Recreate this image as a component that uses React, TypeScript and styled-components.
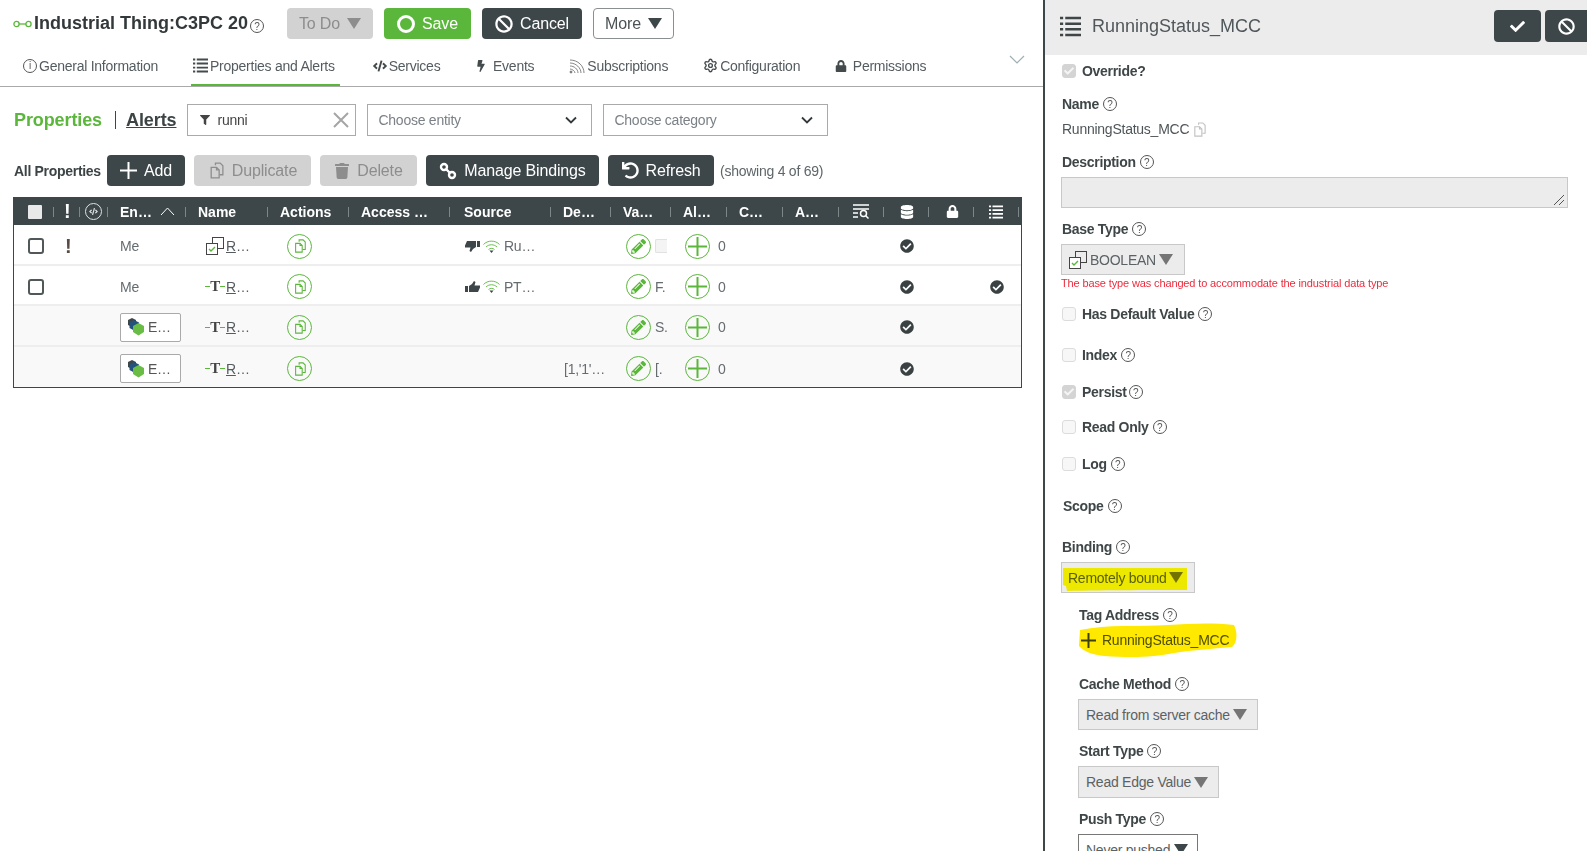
import React from 'react';
import styled, { createGlobalStyle } from 'styled-components';
import { Settings } from 'lucide-react';
import {
  FaBan,
  FaBolt,
  FaCheck,
  FaCheckCircle,
  FaCode,
  FaDatabase,
  FaFilter,
  FaLock,
  FaPencilAlt,
  FaTrash,
  FaUndo,
} from 'react-icons/fa';

const DARK = '#3d4648';
const GREEN = '#5bb73b';
const TEXT = '#5a6266';

const GlobalStyle = createGlobalStyle`
  html, body { margin: 0; padding: 0; height: 100%; overflow: hidden; background: #fff; }
  body {
    font-family: "Liberation Sans", Arial, sans-serif;
    font-size: 14px;
    letter-spacing: -0.25px;
    color: ${TEXT};
  }
  * { box-sizing: border-box; }
`;

const Page = styled.div`
  display: flex;
  width: 1587px;
  height: 851px;
  overflow: hidden;
`;

const Left = styled.div`
  width: 1043px;
  flex: none;
`;

const TopBar = styled.div`
  display: flex;
  align-items: center;
  height: 31px;
  margin-top: 8px;
  padding-left: 13px;
`;

const Title = styled.h1`
  display: flex;
  align-items: center;
  margin: 0;
  width: 274px;
  font-size: 18px;
  font-weight: 700;
  letter-spacing: 0;
  color: #33393b;
  white-space: nowrap;
`;

const Btn = styled.button<{ $kind?: 'dark' | 'green' | 'off' | 'line'; $w: number; $ml?: number }>`
  display: inline-flex;
  align-items: center;
  justify-content: center;
  gap: 7px;
  width: ${({ $w }) => $w}px;
  height: 31px;
  margin-left: ${({ $ml }) => $ml ?? 9}px;
  padding: 0;
  flex: none;
  font: 16px "Liberation Sans", Arial, sans-serif;
  letter-spacing: -0.15px;
  border-radius: 4px;
  border: ${({ $kind }) => ($kind === 'line' ? '1px solid #8a8f91' : '0')};
  background: ${({ $kind }) =>
    $kind === 'green' ? GREEN : $kind === 'off' ? '#d2d2d2' : $kind === 'line' ? '#fff' : DARK};
  color: ${({ $kind }) => ($kind === 'off' ? '#8d8d8d' : $kind === 'line' ? '#4b5254' : '#fff')};
`;

const Caret = styled.i<{ $color?: string; $size?: number }>`
  display: inline-block;
  width: 0;
  height: 0;
  flex: none;
  border-left: ${({ $size }) => $size ?? 7}px solid transparent;
  border-right: ${({ $size }) => $size ?? 7}px solid transparent;
  border-top: ${({ $size }) => ($size ?? 7) + 4}px solid ${({ $color }) => $color ?? '#757575'};
`;

const Ring = styled.i`
  display: inline-block;
  width: 18px;
  height: 18px;
  border: 3px solid #fff;
  border-radius: 50%;
`;

const HelpMark = styled.span<{ $ml?: number; $mt?: number }>`
  display: inline-flex;
  align-items: center;
  justify-content: center;
  width: 14px;
  height: 14px;
  margin-left: ${({ $ml }) => $ml ?? 4}px;
  margin-top: ${({ $mt }) => $mt ?? 0}px;
  border: 1px solid #555;
  border-radius: 50%;
  font: 400 10px "Liberation Sans", Arial, sans-serif;
  color: #555;
  flex: none;
`;

const Tabs = styled.nav`
  display: flex;
  gap: 25px;
  height: 48px;
  padding-left: 18px;
  border-bottom: 1px solid #aaa;
  position: relative;
`;

const Tab = styled.div<{ $active?: boolean; $ml?: number; $pl?: number }>`
  display: flex;
  align-items: center;
  gap: 2px;
  height: 47px;
  margin-left: ${({ $ml }) => $ml ?? 0}px;
  padding: 8px 5px 0 ${({ $pl }) => $pl ?? 5}px;
  font-size: 14px;
  color: #555c60;
  white-space: nowrap;
  border-bottom: 2px solid ${({ $active }) => ($active ? GREEN : 'transparent')};
  svg { flex: none; color: #444b4d; }
`;

const TabsChevron = styled.span`
  position: absolute;
  right: 18px;
  top: 16px;
  color: #9fb0b4;
  line-height: 0;
`;

const FilterRow = styled.div`
  display: flex;
  align-items: center;
  height: 32px;
  margin-top: 17px;
  padding-left: 14px;
`;

const PropsLink = styled.span`
  font-size: 18px;
  font-weight: 700;
  letter-spacing: -0.1px;
  color: ${GREEN};
`;

const Divider = styled.span`
  width: 1px;
  height: 18px;
  margin: 0 10px 0 13px;
  background: #444;
`;

const AlertsLink = styled.span`
  font-size: 18px;
  font-weight: 700;
  letter-spacing: -0.1px;
  color: #3d4446;
  text-decoration: underline;
`;

const FilterBox = styled.div`
  display: flex;
  align-items: center;
  width: 169px;
  height: 32px;
  margin-left: 11px;
  padding: 0 6px 0 12px;
  border: 1px solid #aaa;
  font-size: 14px;
  color: #444;
  svg:first-child { margin-right: 7px; color: #444; }
  span { flex: 1; }
`;

const Choose = styled.div<{ $ml: number }>`
  display: flex;
  align-items: center;
  justify-content: space-between;
  width: 225px;
  height: 32px;
  margin-left: ${({ $ml }) => $ml}px;
  padding: 0 14px 0 10px;
  border: 1px solid #aaa;
  font-size: 14px;
  color: #7b8187;
`;

const ActionRow = styled.div`
  display: flex;
  align-items: center;
  height: 31px;
  margin-top: 19px;
  padding-left: 14px;
`;

const AllLabel = styled.b`
  width: 93px;
  font-size: 14px;
  letter-spacing: -0.3px;
  color: #3d4446;
  white-space: nowrap;
`;

const Showing = styled.span`
  margin-left: 6px;
  font-size: 14px;
  color: #5f6669;
`;

const TableBox = styled.div`
  width: 1009px;
  margin: 11px 0 0 13px;
  border: 1px solid ${DARK};
`;

const COLUMNS = '40px 26px 28px 78px 82px 81px 101px 101px 60px 60px 56px 56px 56px 45px 45px 45px 45px 1fr';

const HeaderRow = styled.div`
  display: grid;
  grid-template-columns: ${COLUMNS};
  height: 27px;
  background: ${DARK};
  color: #fff;
`;

const HeadCell = styled.div<{ $pad?: number; $line?: boolean; $big?: boolean }>`
  display: flex;
  align-items: center;
  justify-content: space-between;
  align-self: center;
  height: 10px;
  padding-left: ${({ $pad }) => $pad ?? 12}px;
  border-right: ${({ $line }) => ($line === false ? '0' : '1px solid #7d8688')};
  font-size: ${({ $big }) => ($big ? 20 : 14)}px;
  font-weight: 700;
  letter-spacing: 0;
  white-space: nowrap;
  svg { flex: none; }
`;

const HeadBox = styled.i`
  display: block;
  width: 14px;
  height: 14px;
  background: #e9e9e9;
  border-radius: 1px;
`;

const CodeRing = styled.span`
  display: inline-flex;
  align-items: center;
  justify-content: center;
  width: 17px;
  height: 17px;
  border: 1px solid #dfe3e3;
  border-radius: 50%;
  color: #dfe3e3;
`;

const Row = styled.div<{ $shade?: boolean }>`
  display: grid;
  grid-template-columns: ${COLUMNS};
  height: 40.5px;
  padding-top: 4px;
  align-items: center;
  background: ${({ $shade }) => ($shade ? '#f9f9f9' : '#fff')};
  border-bottom: 2px solid #eee;
  font-size: 14px;
  color: #656c70;
  &:last-child { border-bottom: 0; }
`;

const Cell = styled.div<{ $pad?: number; $gap?: number }>`
  display: flex;
  align-items: center;
  gap: ${({ $gap }) => $gap ?? 0}px;
  min-width: 0;
  padding-left: ${({ $pad }) => $pad ?? 0}px;
  white-space: nowrap;
  svg { flex: none; }
`;

const Check = styled.i`
  display: block;
  width: 16px;
  height: 16px;
  border: 2px solid #51585a;
  border-radius: 3px;
  background: #fff;
`;

const Bang = styled.b`
  font-size: 20px;
  color: #5a4a44;
  line-height: 1;
`;

const EntityBadge = styled.div`
  display: flex;
  align-items: center;
  gap: 3px;
  width: 61px;
  height: 29px;
  padding-left: 6px;
  border: 1px solid #aaa;
  border-radius: 2px;
  background: #fff;
  color: #555;
`;

const NameLink = styled.span`
  color: #555c60;
  span { text-decoration: underline; }
`;

const TextIcon = styled.span`
  display: inline-flex;
  align-items: center;
  width: 18px;
  flex: none;
  justify-content: center;
  font: 700 15px "Liberation Serif", serif;
  color: #444;
  &::before, &::after {
    content: '';
    width: 5px;
    flex: none;
    height: 1px;
    background: ${GREEN};
  }
`;

const ActionCircle = styled.span`
  display: inline-flex;
  align-items: center;
  justify-content: center;
  width: 25px;
  height: 25px;
  flex: none;
  border: 1px solid ${GREEN};
  border-radius: 50%;
  color: ${GREEN};
`;

const MiniBox = styled.i`
  display: block;
  width: 12px;
  height: 14px;
  flex: none;
  border: 1px solid #e1e1e1;
  border-right: 0;
  border-radius: 2px 0 0 2px;
  background: #f4f4f4;
`;

const Right = styled.aside`
  width: 544px;
  height: 851px;
  flex: none;
  overflow: hidden;
  border-left: 2px solid ${DARK};
`;

const PanelHead = styled.header`
  display: flex;
  align-items: center;
  height: 55px;
  padding: 0 0 3px 15px;
  background: #ececec;
  svg { color: #3f4648; }
`;

const PanelTitle = styled.div`
  flex: 1;
  margin-left: 11px;
  font-size: 18px;
  letter-spacing: 0;
  color: #50575a;
`;

const SquareBtn = styled.button<{ $ml?: number; $w: number }>`
  display: inline-flex;
  align-items: center;
  justify-content: center;
  width: ${({ $w }) => $w}px;
  height: 32px;
  margin-left: ${({ $ml }) => $ml ?? 0}px;
  padding: 0;
  flex: none;
  border: 0;
  border-radius: 4px 0 0 4px;
  border-top-right-radius: ${({ $w }) => ($w > 44 ? '4px' : '0')};
  border-bottom-right-radius: ${({ $w }) => ($w > 44 ? '4px' : '0')};
  background: ${DARK};
  svg { color: #fff; }
`;

const Form = styled.div`
  padding-left: 16px;
`;

const Nested = styled.div`
  padding-left: 17px;
`;

const Line = styled.div<{ $mt: number; $pl?: number }>`
  display: flex;
  align-items: center;
  height: 18px;
  margin-top: ${({ $mt }) => $mt}px;
  padding-left: ${({ $pl }) => $pl ?? 1}px;
  font-size: 14px;
  color: #4f5659;
  white-space: nowrap;
  position: relative;
`;

const FieldName = styled.b`
  font-weight: 700;
  letter-spacing: -0.3px;
  color: #3f4648;
`;

const Box = styled.i<{ $checked?: boolean }>`
  display: inline-flex;
  align-items: center;
  justify-content: center;
  width: 14px;
  height: 14px;
  margin-right: 6px;
  flex: none;
  border-radius: 3px;
  border: 1px solid ${({ $checked }) => ($checked ? '#d4d4d4' : '#dcdcdc')};
  background: ${({ $checked }) => ($checked ? '#d4d4d4' : '#f7f7f7')};
  color: #f5f5f5;
`;

const TextArea = styled.div`
  width: 507px;
  height: 31px;
  margin-top: 6px;
  background: #ececec;
  border: 1px solid #c8c8c8;
  display: flex;
  align-items: flex-end;
  justify-content: flex-end;
  padding: 0 3px 2px 0;
  color: #555;
  line-height: 0;
`;

const Select = styled.div<{ $w: number; $h?: number; $plain?: boolean; $gap?: number }>`
  display: flex;
  align-items: center;
  gap: ${({ $gap }) => $gap ?? 3}px;
  width: ${({ $w }) => $w}px;
  height: ${({ $h }) => $h ?? 31}px;
  margin-top: 6px;
  padding-left: 7px;
  background: ${({ $plain }) => ($plain ? '#fff' : '#ececec')};
  border: 1px solid ${({ $plain }) => ($plain ? '#777' : '#c8c8c8')};
  font-size: 14px;
  color: #5b6266;
  white-space: nowrap;
  position: relative;
`;

const ErrorText = styled.div`
  margin-top: 1px;
  height: 14px;
  font-size: 11px;
  letter-spacing: -0.13px;
  line-height: 14px;
  color: #ee2a3c;
  white-space: nowrap;
`;

const Marker = styled.svg`
  position: absolute;
  mix-blend-mode: multiply;
  pointer-events: none;
`;

const CopyIcon: React.FC<{ size?: number; color?: string }> = ({ size = 15, color = 'currentColor' }) => (
  <svg width={size} height={size} viewBox="0 0 16 16" fill="none" stroke={color} strokeWidth="1.2">
    <path d="M7 3V1h4.5L14 3.5V12h-3" />
    <path d="M3 5h5l2.5 2.5V15H3z" />
    <path d="M8 5v2.5h2.5" />
  </svg>
);

const PlusIcon: React.FC<{ size: number; width?: number; color?: string }> = ({ size, width = 2, color = 'currentColor' }) => (
  <svg width={size} height={size} viewBox="0 0 20 20" fill="none" stroke={color} strokeWidth={(width * 20) / size}>
    <path d="M10 0v20M0 10h20" />
  </svg>
);

const ListIcon: React.FC<{ size: number; color?: string }> = ({ size, color = 'currentColor' }) => (
  <svg width={size} height={size} viewBox="0 0 20 20" fill="none" stroke={color} strokeWidth="2.4">
    <path d="M0 2h3M5 2h15M0 7.300h3M5 7.300h15M0 12.700h3M5 12.700h15M0 18h3M5 18h15" />
  </svg>
);

const BoolIcon: React.FC = () => (
  <svg width="18" height="18" viewBox="0 0 18 18" fill="none">
    <rect x="6.5" y="0.500" width="11" height="11" stroke="#444" fill="none" />
    <rect x="0.500" y="6.500" width="11" height="11" stroke="#444" fill="#fff" />
    <path d="M3 12l2 2 4-4" stroke={GREEN} strokeWidth="1.4" />
  </svg>
);

const HexIcon: React.FC = () => (
  <svg width="18" height="18" viewBox="0 0 18 18">
    <polygon points="5,0 9,2 9,7 5,9 1,7 1,2" fill="#3d4648" />
    <polygon points="7,2 12,4.500 12,10 7,12.500 2.500,10 2.500,4.500" fill="#23527c" />
    <polygon points="11.500,5 17,8 17,14 11.500,17.500 6,14 6,8" fill="#69bd45" />
  </svg>
);

const BindIcon: React.FC = () => (
  <svg width="18" height="18" viewBox="0 0 18 18" fill="none" stroke="#fff" strokeWidth="2.4">
    <circle cx="5" cy="5" r="3" />
    <circle cx="13" cy="13" r="3" />
    <path d="M7.500 7.500l3 3" />
  </svg>
);

const RssIcon: React.FC = () => (
  <svg width="16" height="16" viewBox="0 0 16 16" fill="none" stroke="#777" strokeWidth="0.9">
    <path d="M1 5c6 0 11 5 11 10" />
    <path d="M1 2c8 0 14 6 14 13" />
    <path d="M1 8c4 0 8 3 8 7" />
    <path d="M1 11c2 0 5 2 5 4" />
    <circle cx="2" cy="14" r="1" fill="#777" />
  </svg>
);

const ListSearchIcon: React.FC = () => (
  <svg width="16" height="15" viewBox="0 0 16 15" fill="none" stroke="#fff" strokeWidth="1.5">
    <path d="M0 1h16M0 5h16M0 9h5M0 13h5" />
    <circle cx="10.500" cy="9.500" r="3" />
    <path d="M13 12l2.500 2.500" />
  </svg>
);

const ThumbIcon: React.FC<{ down?: boolean }> = ({ down }) => (
  <svg width="15" height="11" viewBox="0 0 15 11" fill="#3d4648" style={down ? { transform: 'scale(-1,-1)' } : undefined}>
    <rect x="0" y="5" width="3" height="6" />
    <path d="M4 5l3-2 2-3 1.500 1-1 3.500H15v2l-2 4.500H4z" />
  </svg>
);

const WifiIcon: React.FC = () => (
  <svg width="17" height="13" viewBox="0 0 17 13" fill="none" stroke={GREEN} strokeWidth="0.9">
    <path d="M0.500 4.500C4.500 0 12.500 0 16.500 4.500" />
    <path d="M3 7c3-3 8-3 11 0" />
    <path d="M5.500 9.500c1.500-1.500 4.500-1.500 6 0" />
    <path d="M6.500 10.500h4l-2 2.500z" fill="#3d4648" stroke="none" />
  </svg>
);

const Help: React.FC<{ ml?: number; mt?: number }> = ({ ml, mt }) => (
  <HelpMark $ml={ml} $mt={mt}>
    ?
  </HelpMark>
);

const HEADERS = ['En…', 'Name', 'Actions', 'Access …', 'Source', 'De…', 'Va…', 'Al…', 'C…', 'A…'];

type RowData = {
  check: boolean;
  bang?: boolean;
  me: boolean;
  bool?: boolean;
  thumb?: 'up' | 'down';
  source?: string;
  def?: string;
  value: string;
  shade?: boolean;
  listed?: boolean;
};

const ROWS: RowData[] = [
  { check: true, bang: true, me: true, bool: true, thumb: 'down', source: 'Ru…', value: '' },
  { check: true, me: true, thumb: 'up', source: 'PT…', value: 'F.', listed: true },
  { check: false, me: false, value: 'S.', shade: true },
  { check: false, me: false, def: "[1,'1'…", value: '[.', shade: true },
];

const ChevronSmall: React.FC = () => (
  <svg width="12" height="8" viewBox="0 0 12 8" fill="none" stroke="#33393b" strokeWidth="1.8">
    <path d="M1 1.500l5 5 5-5" />
  </svg>
);

const App: React.FC = () => {
  return (
    <Page>
      <GlobalStyle />
      <Left>
        <TopBar>
          <Title>
            <svg width="19" height="8" viewBox="0 0 19 8" fill="none" stroke={GREEN} strokeWidth="1.3" style={{ marginRight: 2 }}>
              <circle cx="3.500" cy="4" r="2.600" />
              <circle cx="15.500" cy="4" r="2.600" />
              <path d="M6 4h7" />
            </svg>
            Industrial Thing:C3PC 20
            <Help ml={2} mt={5} />
          </Title>
          <Btn $kind="off" $w={86} $ml={0}>
            To Do <Caret $color="#8d8d8d" $size={7} />
          </Btn>
          <Btn $kind="green" $w={87} $ml={11}>
            <Ring /> Save
          </Btn>
          <Btn $w={100} $ml={11}>
            <FaBan size={18} /> Cancel
          </Btn>
          <Btn $kind="line" $w={81} $ml={11}>
            More <Caret $color="#3d4648" />
          </Btn>
        </TopBar>
        <Tabs>
          <Tab>
            <HelpMark $ml={0}>i</HelpMark> General Information
          </Tab>
          <Tab $active $ml={3} $pl={2}>
            <ListIcon size={15} /> Properties and Alerts
          </Tab>
          <Tab $ml={3}>
            <FaCode size={14} /> Services
          </Tab>
          <Tab>
            <FaBolt size={12} /> &nbsp;Events
          </Tab>
          <Tab>
            <RssIcon /> Subscriptions
          </Tab>
          <Tab>
            <Settings size={15} strokeWidth={2.2} /> Configuration
          </Tab>
          <Tab>
            <FaLock size={12} /> &nbsp;Permissions
          </Tab>
          <TabsChevron>
            <svg width="16" height="10" viewBox="0 0 16 10" fill="none" stroke="currentColor" strokeWidth="1.2">
              <path d="M1 1l7 7 7-7" />
            </svg>
          </TabsChevron>
        </Tabs>
        <FilterRow>
          <PropsLink>Properties</PropsLink>
          <Divider />
          <AlertsLink>Alerts</AlertsLink>
          <FilterBox>
            <FaFilter size={10} />
            <span>runni</span>
            <svg width="16" height="16" viewBox="0 0 16 16" stroke="#a5a5a5" strokeWidth="2">
              <path d="M1 1l14 14M15 1L1 15" />
            </svg>
          </FilterBox>
          <Choose $ml={11}>
            Choose entity <ChevronSmall />
          </Choose>
          <Choose $ml={11}>
            Choose category <ChevronSmall />
          </Choose>
        </FilterRow>
        <ActionRow>
          <AllLabel>All Properties</AllLabel>
          <Btn $w={78} $ml={0}>
            <PlusIcon size={17} /> Add
          </Btn>
          <Btn $kind="off" $w={117}>
            <CopyIcon size={17} /> Duplicate
          </Btn>
          <Btn $kind="off" $w={97}>
            <FaTrash size={16} /> Delete
          </Btn>
          <Btn $w={173}>
            <BindIcon /> Manage Bindings
          </Btn>
          <Btn $w={106}>
            <FaUndo size={17} /> Refresh
          </Btn>
          <Showing>(showing 4 of 69)</Showing>
        </ActionRow>
        <TableBox>
          <HeaderRow>
            <HeadCell $pad={14}>
              <HeadBox />
            </HeadCell>
            <HeadCell $pad={10} $big>
              !
            </HeadCell>
            <HeadCell $pad={5}>
              <CodeRing>
                <FaCode size={9} />
              </CodeRing>
            </HeadCell>
            {HEADERS.map((h, i) => (
              <HeadCell key={h} $pad={h === 'Source' ? 14 : 12}>
                <span>{h}</span>
                {i === 0 && (
                  <svg width="15" height="9" viewBox="0 0 15 9" fill="none" stroke="#fff" strokeWidth="1" style={{ marginRight: 10 }}>
                    <path d="M1 8l6.500-7L14 8" />
                  </svg>
                )}
              </HeadCell>
            ))}
            <HeadCell $pad={14}>
              <ListSearchIcon />
            </HeadCell>
            <HeadCell $pad={16}>
              <FaDatabase size={14} />
            </HeadCell>
            <HeadCell $pad={17}>
              <FaLock size={13} />
            </HeadCell>
            <HeadCell $pad={15}>
              <ListIcon size={14} />
            </HeadCell>
            <HeadCell $line={false} />
          </HeaderRow>
          {ROWS.map((r, i) => (
            <Row key={i} $shade={r.shade}>
              <Cell $pad={14}>{r.check && <Check />}</Cell>
              <Cell $pad={11}>{r.bang && <Bang>!</Bang>}</Cell>
              <Cell />
              <Cell $pad={12}>
                {r.me ? (
                  'Me'
                ) : (
                  <EntityBadge>
                    <HexIcon />E…
                  </EntityBadge>
                )}
              </Cell>
              <Cell $pad={20} $gap={2}>
                {r.bool ? <BoolIcon /> : <TextIcon>T</TextIcon>}
                <NameLink>
                  <span>R</span>…
                </NameLink>
              </Cell>
              <Cell $pad={19}>
                <ActionCircle>
                  <CopyIcon size={14} />
                </ActionCircle>
              </Cell>
              <Cell />
              <Cell $pad={15} $gap={3}>
                {r.thumb && <ThumbIcon down={r.thumb === 'down'} />}
                {r.thumb && <WifiIcon />}
                <span style={{ marginLeft: 1 }}>{r.source}</span>
              </Cell>
              <Cell $pad={13}>{r.def}</Cell>
              <Cell $pad={15} $gap={4}>
                <ActionCircle>
                  <FaPencilAlt size={15} />
                </ActionCircle>
                {r.value ? <span>{r.value}</span> : <MiniBox />}
              </Cell>
              <Cell $pad={14} $gap={8}>
                <ActionCircle>
                  <PlusIcon size={19} />
                </ActionCircle>
                0
              </Cell>
              <Cell />
              <Cell />
              <Cell />
              <Cell $pad={16}>
                <FaCheckCircle size={14} color="#3a4143" />
              </Cell>
              <Cell />
              <Cell $pad={16}>{r.listed && <FaCheckCircle size={14} color="#3a4143" />}</Cell>
              <Cell />
            </Row>
          ))}
        </TableBox>
      </Left>
      <Right>
        <PanelHead>
          <ListIcon size={21} />
          <PanelTitle>RunningStatus_MCC</PanelTitle>
          <SquareBtn $w={47}>
            <FaCheck size={15} />
          </SquareBtn>
          <SquareBtn $w={42} $ml={4}>
            <FaBan size={17} />
          </SquareBtn>
        </PanelHead>
        <Form>
          <Line $mt={7}>
            <Box $checked>
              <FaCheck size={10} />
            </Box>
            <FieldName>Override?</FieldName>
          </Line>
          <Line $mt={15}>
            <FieldName>Name</FieldName>
            <Help />
          </Line>
          <Line $mt={7}>
            RunningStatus_MCC
            <span style={{ marginLeft: 3, lineHeight: 0 }}>
              <CopyIcon size={15} color="#c2c2c2" />
            </span>
          </Line>
          <Line $mt={15}>
            <FieldName>Description</FieldName>
            <Help />
          </Line>
          <TextArea>
            <svg width="10" height="10" viewBox="0 0 10 10" fill="none" stroke="currentColor" strokeWidth="1">
              <path d="M0 10L10 0M5 10l5-5" />
            </svg>
          </TextArea>
          <Line $mt={12}>
            <FieldName>Base Type</FieldName>
            <Help />
          </Line>
          <Select $w={124}>
            <BoolIcon />
            BOOLEAN
            <Caret />
          </Select>
          <ErrorText>The base type was changed to accommodate the industrial data type</ErrorText>
          <Line $mt={15}>
            <Box />
            <FieldName>Has Default Value</FieldName>
            <Help />
          </Line>
          <Line $mt={23}>
            <Box />
            <FieldName>Index</FieldName>
            <Help />
          </Line>
          <Line $mt={19}>
            <Box $checked>
              <FaCheck size={10} />
            </Box>
            <FieldName>Persist</FieldName>
            <Help ml={2} />
          </Line>
          <Line $mt={17}>
            <Box />
            <FieldName>Read Only</FieldName>
            <Help />
          </Line>
          <Line $mt={19}>
            <Box />
            <FieldName>Log</FieldName>
            <Help />
          </Line>
          <Line $mt={24} $pl={2}>
            <FieldName>Scope</FieldName>
            <Help />
          </Line>
          <Line $mt={23}>
            <FieldName>Binding</FieldName>
            <Help />
          </Line>
          <Select $w={134} $gap={3} style={{ paddingLeft: 6 }}>
            Remotely bound
            <Caret />
            <Marker width="126" height="25" viewBox="0 0 126 25" style={{ left: 0, top: 4 }}>
              <path d="M1 1h124v22c-30 0-80 0-120 1l-1-5-3-1z" fill="#fffb00" />
            </Marker>
          </Select>
          <Nested>
            <Line $mt={13}>
              <FieldName>Tag Address</FieldName>
              <Help />
            </Line>
            <Line $mt={7} $pl={3}>
              <PlusIcon size={15} color="#3d4648" />
              <span style={{ marginLeft: 6 }}>RunningStatus_MCC</span>
              <Marker width="160" height="38" viewBox="0 0 160 38" style={{ left: 0, top: -9 }}>
                <path
                  d="M2 8C30 2 60 5 90 3c20-1 40-3 66 0 4 8 3 18-2 22-20 2-40 3-58 6-20 4-40 5-70 3C16 33 6 30 1 24z"
                  fill="#ffe900"
                />
              </Marker>
            </Line>
            <Line $mt={26}>
              <FieldName>Cache Method</FieldName>
              <Help />
            </Line>
            <Select $w={180}>
              Read from server cache
              <Caret />
            </Select>
            <Line $mt={12}>
              <FieldName>Start Type</FieldName>
              <Help />
            </Line>
            <Select $w={141} $h={32}>
              Read Edge Value
              <Caret />
            </Select>
            <Line $mt={12}>
              <FieldName>Push Type</FieldName>
              <Help />
            </Line>
            <Select $w={120} $plain $gap={4}>
              Never pushed
              <Caret $color="#3d4648" />
            </Select>
          </Nested>
        </Form>
      </Right>
    </Page>
  );
};

export default App;
